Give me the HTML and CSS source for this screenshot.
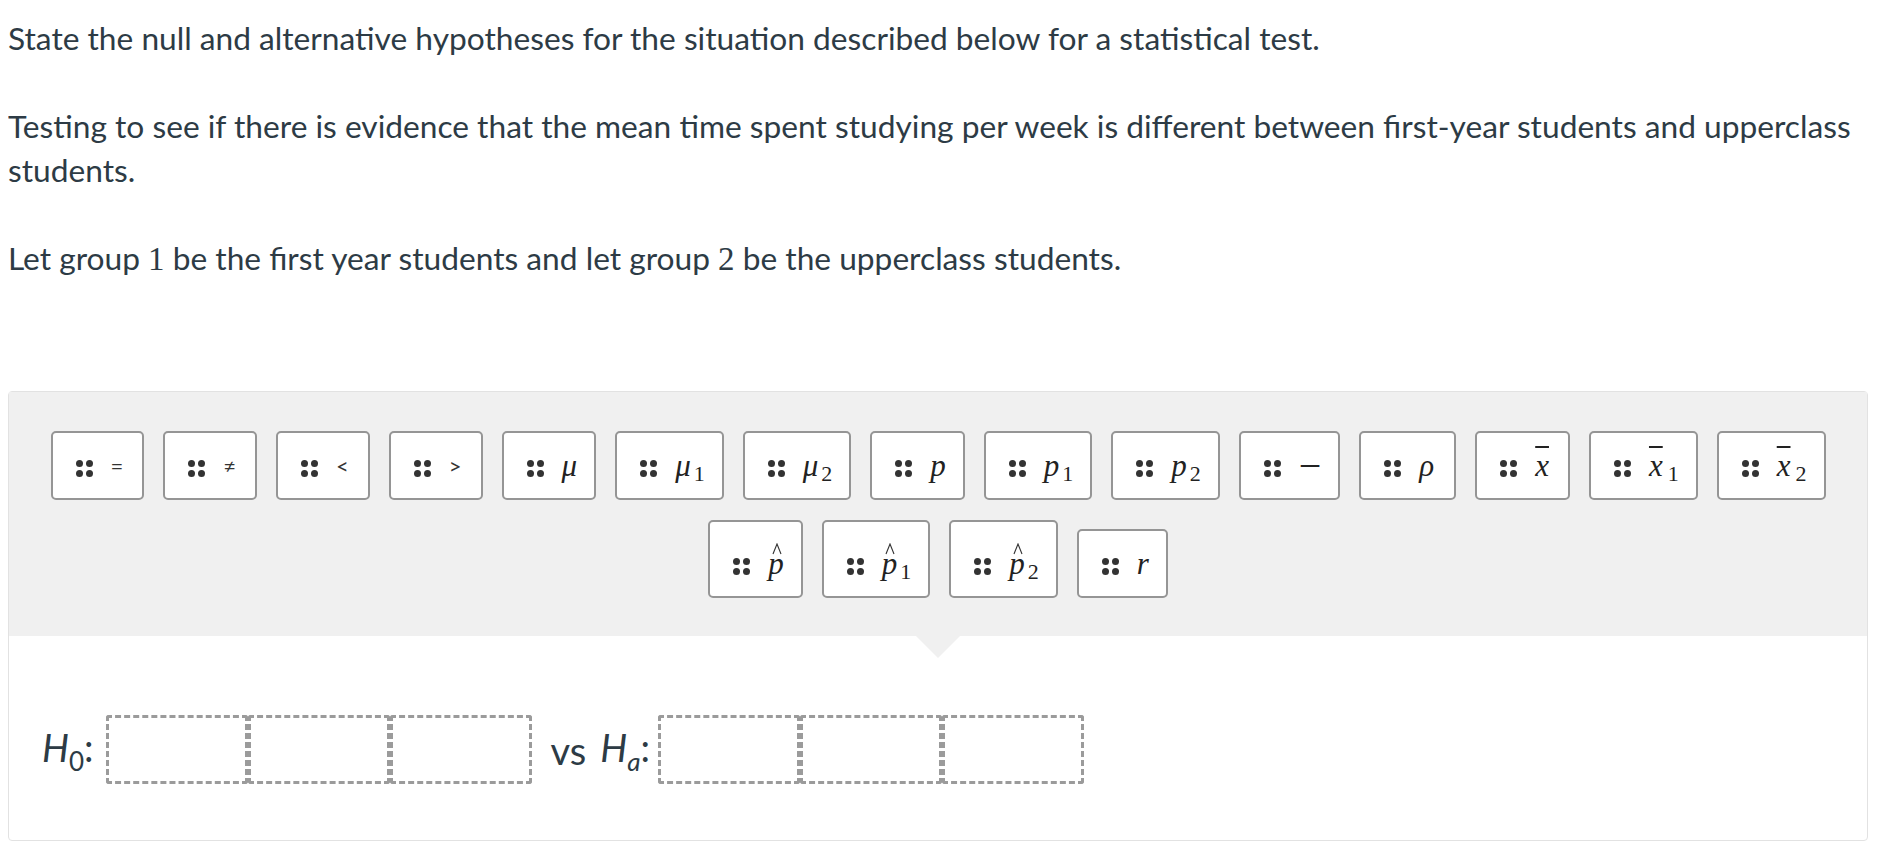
FILE: index.html
```html
<!DOCTYPE html>
<html lang="en">
<head>
<meta charset="utf-8">
<title>Hypotheses</title>
<link rel="stylesheet" href="styles.css">
</head>
<body>
<div class="page">
  <p class="q">State the null and alternative hypotheses for the situation described below for a statistical test.</p>
  <p class="q">Testing to see if there is evidence that the mean time spent studying per week is different between first-year students and upperclass students.</p>
  <p class="q">Let group <span class="num">1</span> be the first year students and let group <span class="num">2</span> be the upperclass students.</p>

  <div class="panel">
    <div class="bank">
      <div class="key"><span class="grip"><i></i><i></i><i></i><i></i></span><span class="sym rel">=</span></div>
      <div class="key"><span class="grip"><i></i><i></i><i></i><i></i></span><span class="sym rel">≠</span></div>
      <div class="key"><span class="grip"><i></i><i></i><i></i><i></i></span><span class="sym rel">&lt;</span></div>
      <div class="key"><span class="grip"><i></i><i></i><i></i><i></i></span><span class="sym rel">&gt;</span></div>
      <div class="key"><span class="grip"><i></i><i></i><i></i><i></i></span><span class="sym">μ</span></div>
      <div class="key"><span class="grip"><i></i><i></i><i></i><i></i></span><span class="sym">μ<span class="sb">1</span></span></div>
      <div class="key"><span class="grip"><i></i><i></i><i></i><i></i></span><span class="sym">μ<span class="sb">2</span></span></div>
      <div class="key"><span class="grip"><i></i><i></i><i></i><i></i></span><span class="sym">p</span></div>
      <div class="key"><span class="grip"><i></i><i></i><i></i><i></i></span><span class="sym">p<span class="sb">1</span></span></div>
      <div class="key"><span class="grip"><i></i><i></i><i></i><i></i></span><span class="sym">p<span class="sb">2</span></span></div>
      <div class="key"><span class="grip"><i></i><i></i><i></i><i></i></span><span class="sym minus">−</span></div>
      <div class="key"><span class="grip"><i></i><i></i><i></i><i></i></span><span class="sym rho">ρ</span></div>
      <div class="key"><span class="grip"><i></i><i></i><i></i><i></i></span><span class="sym"><span class="ov">x</span></span></div>
      <div class="key"><span class="grip"><i></i><i></i><i></i><i></i></span><span class="sym"><span class="ov">x</span><span class="sb">1</span></span></div>
      <div class="key"><span class="grip"><i></i><i></i><i></i><i></i></span><span class="sym"><span class="ov">x</span><span class="sb">2</span></span></div>

      <div class="key tall"><span class="grip"><i></i><i></i><i></i><i></i></span><span class="sym"><span class="acc">p<svg class="hat" width="10" height="12" viewBox="0 0 10 12"><path d="M1 11 L5 1 L9 11" fill="none" stroke="#333" stroke-width="1.1"/></svg></span></span></div>
      <div class="key tall"><span class="grip"><i></i><i></i><i></i><i></i></span><span class="sym"><span class="acc">p<svg class="hat" width="10" height="12" viewBox="0 0 10 12"><path d="M1 11 L5 1 L9 11" fill="none" stroke="#333" stroke-width="1.1"/></svg></span><span class="sb">1</span></span></div>
      <div class="key tall"><span class="grip"><i></i><i></i><i></i><i></i></span><span class="sym"><span class="acc">p<svg class="hat" width="10" height="12" viewBox="0 0 10 12"><path d="M1 11 L5 1 L9 11" fill="none" stroke="#333" stroke-width="1.1"/></svg></span><span class="sb">2</span></span></div>
      <div class="key"><span class="grip"><i></i><i></i><i></i><i></i></span><span class="sym">r</span></div>
    </div>

    <div class="answer">
      <span class="notch"></span>
      <div class="hyp">
        <span class="lbl first"><i>H</i><span class="lsub">0</span>:</span>
        <div class="slots"><span class="slot"></span><span class="slot"></span><span class="slot"></span></div>
        <span class="vs">vs</span>
        <span class="lbl second"><i>H</i><span class="lsub it">a</span>:</span>
        <div class="slots"><span class="slot"></span><span class="slot"></span><span class="slot"></span></div>
      </div>
    </div>
  </div>
</div>
</body>
</html>
```
FILE: styles.css
```css
* { box-sizing: border-box; }

body {
  margin: 8px;
  font-family: Lato, "Open Sans", sans-serif;
  color: #2d3b45;
  background: #fff;
}

.page {
  width: 1860px;
  padding-top: 8px;
}

.q {
  font-size: 31.7px;
  line-height: 44px;
  margin: 0 0 44px;
}

.num {
  font-family: "Liberation Serif", serif;
  font-size: 33px;
}

.panel {
  margin-top: 110px;
  border: 1px solid #e2e2e2;
  border-radius: 4px;
}

.bank {
  background: #f0f0f0;
  padding: 39px 20px 38px;
  display: flex;
  flex-wrap: wrap;
  justify-content: center;
  align-items: flex-end;
  gap: 20px 19px;
}

.key {
  display: flex;
  align-items: flex-end;
  gap: 18px;
  background: #fff;
  border: 2px solid #959595;
  border-radius: 5px;
  padding: 17px 17px 16px 23px;
}

.key.tall { padding-top: 26px; }

.grip {
  display: grid;
  grid-template-columns: 7px 7px;
  grid-auto-rows: 7px;
  gap: 3px;
  margin-bottom: 5px;
}

.grip i {
  display: block;
  width: 7px;
  height: 7px;
  border-radius: 50%;
  background: #333;
}

.sym {
  font-family: "Liberation Serif", "DejaVu Serif", serif;
  font-style: italic;
  font-size: 31px;
  line-height: 32px;
  height: 32px;
  color: #222;
  white-space: nowrap;
}

.sym.rel {
  font-family: Lato, sans-serif;
  font-style: normal;
  font-size: 22px;
  color: #333;
  padding-right: 2px;
}

.sym.minus {
  font-style: normal;
  font-size: 40px;
}

.sym.rho { padding-right: 3px; }

.sb {
  font-style: normal;
  font-size: 22px;
  line-height: 1;
  position: relative;
  top: 5px;
  margin-left: 3px;
}

.ov {
  text-decoration: overline;
  text-decoration-thickness: 1.5px;
  margin-right: 2px;
}

.acc {
  position: relative;
  display: inline-block;
}

.hat {
  position: absolute;
  left: 50%;
  top: -5px;
  margin-left: -4px;
}

.answer {
  position: relative;
  padding: 79px 33px 56px;
}

.notch {
  position: absolute;
  top: 0;
  left: 50%;
  margin-left: -22px;
  width: 0;
  height: 0;
  border-left: 22px solid transparent;
  border-right: 22px solid transparent;
  border-top: 22px solid #f0f0f0;
}

.hyp {
  display: flex;
  align-items: center;
}

.lbl {
  font-size: 38px;
  line-height: 48px;
  white-space: nowrap;
}

.lbl i { font-style: italic; }

.lsub {
  font-size: 26px;
  position: relative;
  top: 9px;
}

.lsub.it { font-style: italic; }

.lbl.first { margin-right: 12px; }
.lbl.second { margin-right: 8px; }

.vs {
  font-size: 38px;
  line-height: 48px;
  margin: 0 14px 0 19px;
}

.slots { display: flex; }

.slot {
  width: 142px;
  height: 69px;
  border: 3px dashed #9b9b9b;
  border-radius: 3px;
}
```
